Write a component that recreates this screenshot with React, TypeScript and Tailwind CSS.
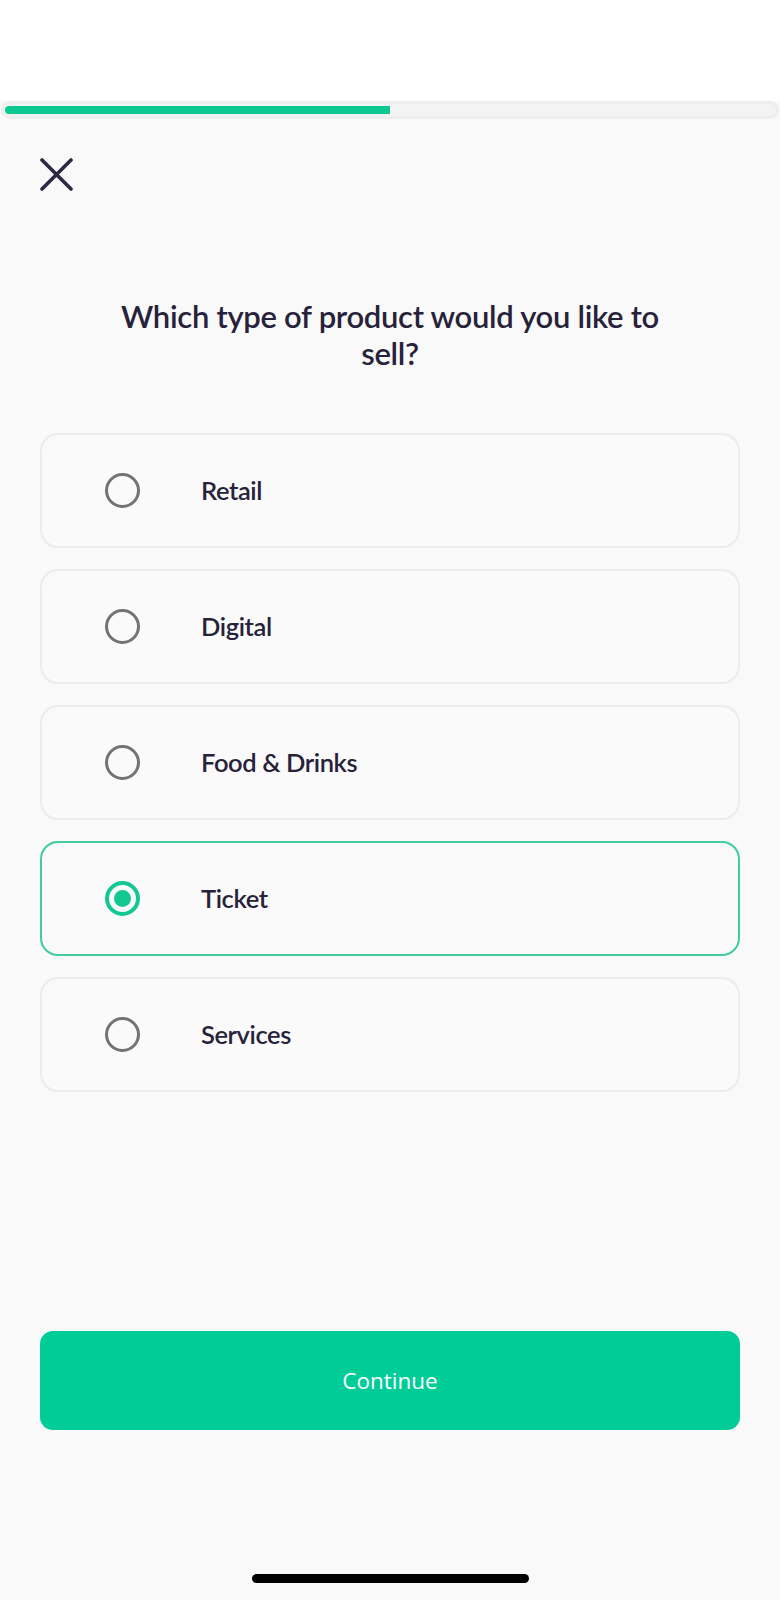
import { useState } from "react";

const options = ["Retail", "Digital", "Food & Drinks", "Ticket", "Services"];

function Radio({ checked }: { checked: boolean }) {
  if (checked) {
    return (
      <div className="w-[35px] h-[35px] rounded-full border-[4px] border-[#14c893] flex items-center justify-center">
        <div className="w-[17px] h-[17px] rounded-full bg-[#14c893]" />
      </div>
    );
  }
  return <div className="w-[35px] h-[35px] rounded-full border-[3.5px] border-[#737373]" />;
}

export default function App() {
  const [selected, setSelected] = useState<string>("Ticket");

  return (
    <div className="min-h-[1600px] bg-[#f9f9fa] flex flex-col" style={{ fontFamily: "Lato, 'Open Sans', sans-serif" }}>
      <div className="h-[101px] bg-white" />
      <div className="mx-[1px] h-[18px] rounded-full border-[3px] border-[#eeeeee] bg-[#f3f3f4] flex items-center px-[1px]">
        <div className="h-[8px] w-1/2 rounded-l-full bg-[#0cc891]" />
      </div>

      <div className="px-[40px] pt-[39px]">
        <button className="w-[33px] h-[33px] flex items-center justify-center">
          <svg width="33" height="33" viewBox="0 0 33 33" fill="none">
            <path d="M2 2L31 31M31 2L2 31" stroke="#2e2844" strokeWidth="3.6" strokeLinecap="round" />
          </svg>
        </button>
      </div>

      <h1 className="mt-[107px] text-center text-[31px] leading-[37px] font-semibold tracking-[-0.3px] text-[#272239]">
        Which type of product would you like to
        <br />
        sell?
      </h1>

      <div className="mt-[61px] px-[40px] flex flex-col gap-[21px]">
        {options.map((opt) => {
          const isSel = selected === opt;
          return (
            <button
              key={opt}
              onClick={() => setSelected(opt)}
              className={
                isSel
                  ? "h-[115px] rounded-[18px] border-[2px] border-[#3fcc9e] bg-[#fafafb] flex items-center pl-[63px] text-left"
                  : "h-[115px] rounded-[18px] border-[2px] border-[#ececee] bg-[#fafafb] flex items-center pl-[63px] text-left"
              }
            >
              <Radio checked={isSel} />
              <span className="ml-[61px] text-[25.5px] font-semibold tracking-[-0.4px] text-[#272239]">{opt}</span>
            </button>
          );
        })}
      </div>

      <div className="mt-[239px] px-[40px]">
        <button
          className="w-full h-[99px] rounded-[13px] bg-[#00cc98] text-white text-[22.5px]"
          style={{ fontFamily: "'Open Sans', sans-serif" }}
        >
          Continue
        </button>
      </div>

      <div className="mt-[144px] flex justify-center">
        <div className="w-[277px] h-[9px] rounded-full bg-black" />
      </div>
    </div>
  );
}
